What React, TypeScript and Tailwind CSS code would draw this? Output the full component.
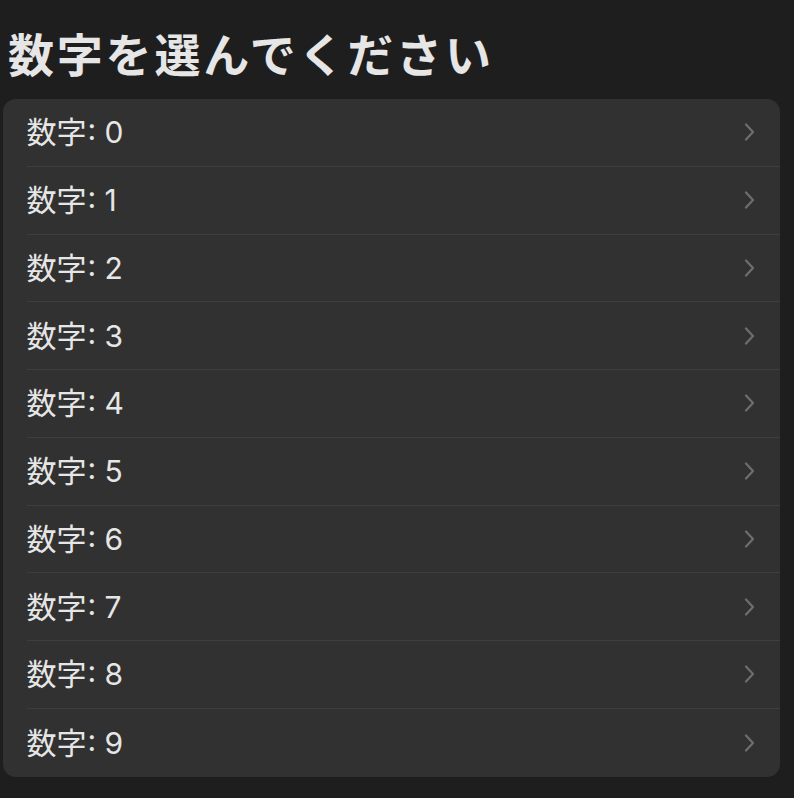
import React from "react";

const font = { fontFamily: 'Inter, "Noto Sans CJK JP", "Noto Sans", sans-serif' };

function Chevron() {
  return (
    <svg width="12" height="18" viewBox="0 0 12 18" fill="none" className="shrink-0">
      <path d="M3 1.5 L10 9 L3 16.5" stroke="#6e6e6e" strokeWidth="2.2" strokeLinecap="round" strokeLinejoin="round" />
    </svg>
  );
}

export default function App() {
  const items = Array.from({ length: 10 }, (_, i) => i);
  return (
    <div className="w-[794px] h-[798px] bg-[#1e1e1e] overflow-hidden" style={font}>
      <h1 className="pl-[8px] pt-[24px] h-[99px] text-[46px] leading-[62px] font-bold text-[#e6e6e6] tracking-[2.8px]">
        数字を選んでください
      </h1>
      <div className="ml-[3px] w-[777px] bg-[#313131] rounded-[13px] overflow-hidden">
        {items.map((i) => (
          <div key={i} className="pl-[24px]">
            <div
              className={
                "h-[67.75px] flex items-center justify-between pr-[25px] " +
                (i < 9 ? "border-b border-[#3e3e3e]" : "")
              }
            >
              <span className="text-[30px] text-[#e6e6e6] leading-none ml-[-0.5px]">
                数字<span className="ml-[1px]">:</span> {i}
              </span>
              <Chevron />
            </div>
          </div>
        ))}
      </div>
    </div>
  );
}
